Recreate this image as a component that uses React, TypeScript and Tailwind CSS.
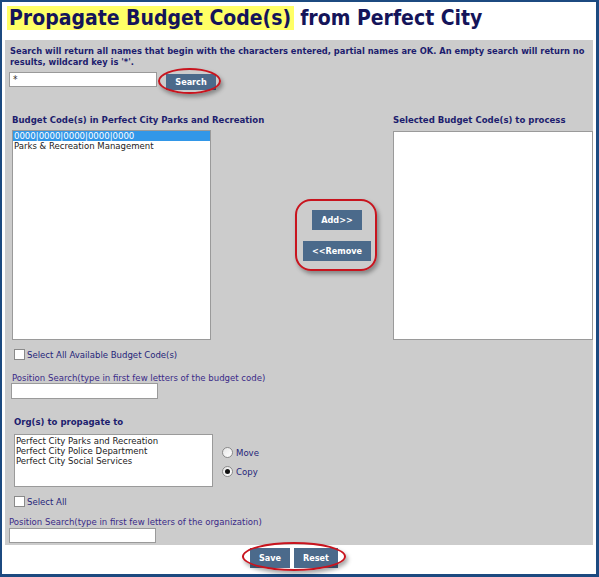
import React from "react";

const btn =
  "bg-[#4b6a8b] text-white font-bold text-[9px] leading-none flex items-center justify-center";

function Ring({ className }: { className: string }) {
  return (
    <span
      className={
        "pointer-events-none absolute border-2 border-[#c8141e] shadow-[2px_3px_4px_rgba(0,0,0,0.35)] " +
        className
      }
    />
  );
}

function Box() {
  return <span className="block h-[11px] w-[11px] shrink-0 border border-[#8a8a8a] bg-white" />;
}

function Radio({ checked }: { checked?: boolean }) {
  return (
    <span className="flex h-[11px] w-[11px] shrink-0 items-center justify-center rounded-full border border-[#8a8a8a] bg-gradient-to-br from-[#e6e6e6] to-white">
      {checked && <span className="h-[5px] w-[5px] rounded-full bg-[#111]" />}
    </span>
  );
}

export default function App() {
  return (
    <div className="flex h-[577px] w-[599px] flex-col border-b-[3px] border-l-2 border-r-[3px] border-t-2 border-[#1c4a80] bg-white font-['DejaVu_Sans_Condensed','DejaVu_Sans',sans-serif]">
      {/* title */}
      <div className="ml-[5px] mt-[4px] flex h-[24px] items-center whitespace-nowrap text-[21px] font-bold leading-none text-[#14145a]">
        <span className="flex h-[24px] items-center bg-[#ffff66] pl-[2px] pr-[3px]">Propagate Budget Code(s)</span>
        <span className="ml-[6px]">from Perfect City</span>
      </div>

      {/* gray panel */}
      <div className="mx-[3px] mt-[10px] flex h-[505px] flex-col bg-[#cccccc]">
        <p className="ml-[5px] mt-[5px] whitespace-nowrap text-[9.25px] font-bold leading-[11px] text-[#1d1d6e]">
          Search will return all names that begin with the characters entered, partial names are OK. An empty search will return no
          <br />
          results, wildcard key is '*'.
        </p>

        <div className="ml-[4px] mt-[5px] flex items-start">
          <div className="flex h-[15px] w-[148px] items-center border border-[#9a9a9a] bg-white pl-[3px] text-[10px] text-[#333]">*</div>
          <div className="relative ml-[9px] mt-[2px]">
            <div className={btn + " h-[16px] w-[50px]"}>Search</div>
            <Ring className="-bottom-[4px] -left-[8px] -right-[5px] -top-[6px] rounded-[50%]" />
          </div>
        </div>

        {/* lists */}
        <div className="ml-[7px] mt-[24px] flex">
          <div className="flex w-[199px] flex-col">
            <div className="h-[11px] whitespace-nowrap text-[9.5px] font-bold leading-[11px] text-[#1d1d6e]">
              Budget Code(s) in Perfect City Parks and Recreation
            </div>
            <div className="mt-[5px] h-[210px] border border-[#9a9a9a] bg-white text-[9.5px] leading-[10px] text-[#222]">
              <div className="bg-[#3297e8] pl-[1px] text-white">0000|0000|0000|0000|0000</div>
              <div className="pl-[1px]">Parks &amp; Recreation Management</div>
            </div>
          </div>

          <div className="ml-[92px] mt-[96px] flex w-[68px] flex-col items-center">
            <div className="relative flex w-[68px] flex-col items-center">
              <div className={btn + " h-[20px] w-[50px]"}>Add&gt;&gt;</div>
              <div className={btn + " mt-[11px] h-[20px] w-[68px]"}>&lt;&lt;Remove</div>
              <Ring className="-bottom-[10px] -left-[8px] -right-[6px] -top-[11px] rounded-[16px]" />
            </div>
          </div>

          <div className="ml-[22px] flex w-[200px] flex-col">
            <div className="h-[11px] whitespace-nowrap text-[9.5px] font-bold leading-[11px] text-[#1d1d6e]">
              Selected Budget Code(s) to process
            </div>
            <div className="mt-[6px] h-[209px] border border-[#9a9a9a] bg-white" />
          </div>
        </div>

        <div className="ml-[9px] mt-[9px] flex items-center text-[9.5px] leading-[11px] text-[#25257a]">
          <Box />
          <span className="ml-[2px]">Select All Available Budget Code(s)</span>
        </div>

        <div className="ml-[7px] mt-[13px] h-[10px] whitespace-nowrap text-[9.5px] leading-[10px] text-[#3a2a88]">
          Position Search(type in first few letters of the budget code)
        </div>
        <div className="ml-[6px] h-[16px] w-[147px] border border-[#9a9a9a] bg-white" />

        <div className="ml-[9px] mt-[18px] h-[10px] whitespace-nowrap text-[9.5px] font-bold leading-[10px] text-[#1d1d6e]">
          Org(s) to propagate to
        </div>

        <div className="ml-[9px] mt-[7px] flex">
          <div className="h-[53px] w-[199px] border border-[#9a9a9a] bg-white pl-[1px] pt-[1px] text-[9.5px] leading-[10px] text-[#222]">
            <div>Perfect City Parks and Recreation</div>
            <div>Perfect City Police Department</div>
            <div>Perfect City Social Services</div>
          </div>
          <div className="ml-[9px] mt-[13px] flex flex-col gap-[8px] text-[9.5px] leading-[11px] text-[#25257a]">
            <div className="flex items-center">
              <Radio />
              <span className="ml-[3px]">Move</span>
            </div>
            <div className="flex items-center">
              <Radio checked />
              <span className="ml-[3px]">Copy</span>
            </div>
          </div>
        </div>

        <div className="ml-[9px] mt-[9px] flex items-center text-[9.5px] leading-[11px] text-[#25257a]">
          <Box />
          <span className="ml-[2px]">Select All</span>
        </div>

        <div className="ml-[4px] mt-[10px] h-[10px] whitespace-nowrap text-[9.5px] leading-[10px] text-[#3a2a88]">
          Position Search(type in first few letters of the organization)
        </div>
        <div className="ml-[4px] mt-[1px] h-[15px] w-[147px] border border-[#9a9a9a] bg-white" />
      </div>

      {/* footer */}
      <div className="ml-[248px] mt-[3px] flex">
        <div className="relative flex gap-[4px]">
          <div className={btn + " h-[20px] w-[40px]"}>Save</div>
          <div className={btn + " h-[20px] w-[44px]"}>Reset</div>
          <Ring className="-bottom-[3px] -left-[8px] -right-[8px] -top-[6px] rounded-[50%]" />
        </div>
      </div>
    </div>
  );
}
